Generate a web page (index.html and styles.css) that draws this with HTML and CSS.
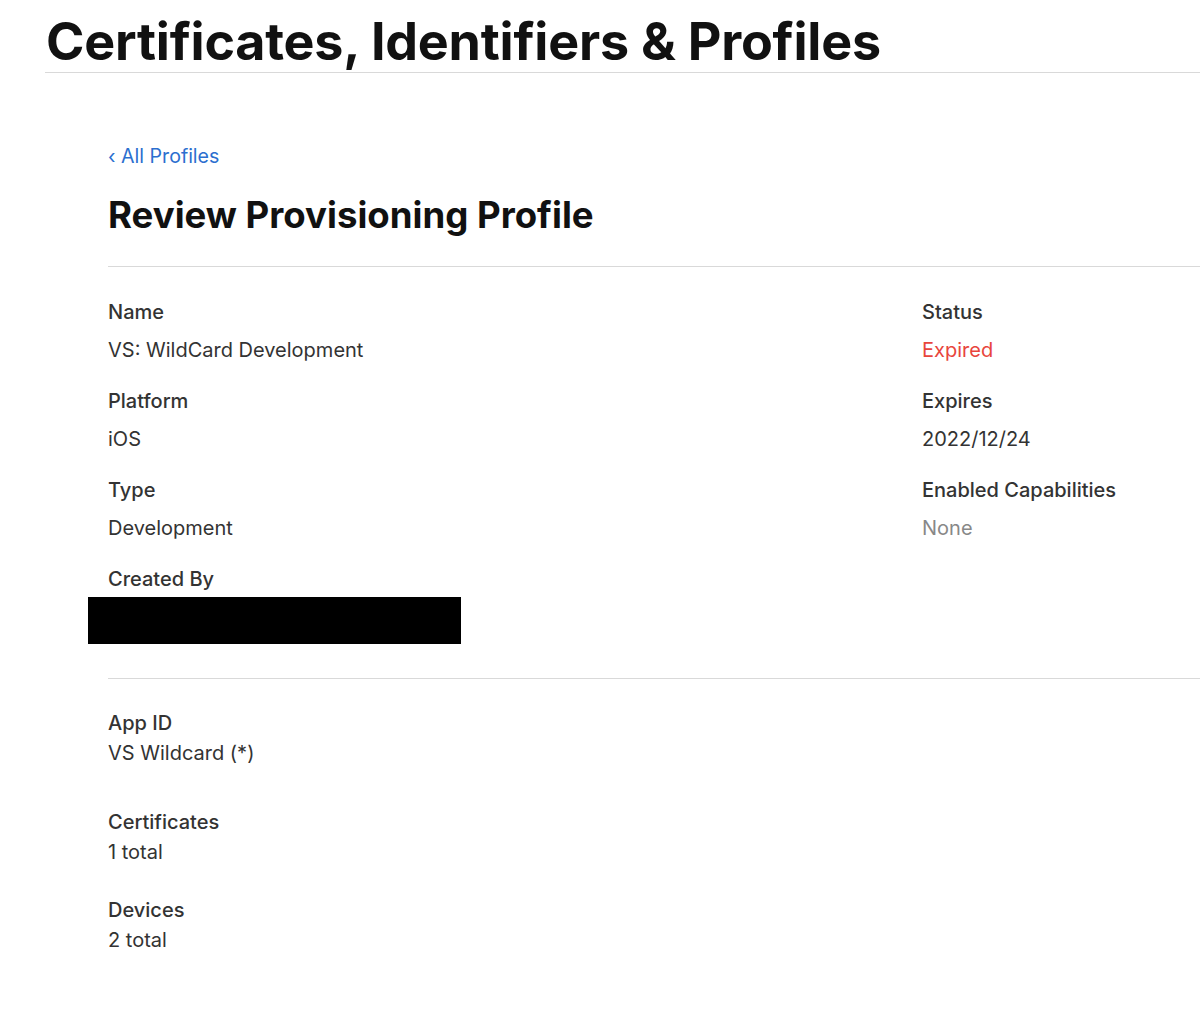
FILE: index.html
```html
<!DOCTYPE html>
<html lang="en">
<head>
<meta charset="utf-8">
<title>Review Provisioning Profile</title>
<link rel="stylesheet" href="styles.css">
</head>
<body>
<header class="page-header">
  <h1 class="page-title">Certificates, Identifiers &amp; Profiles</h1>
</header>
<main class="content">
  <a class="back-link" href="#"><span class="chev">‹</span> All Profiles</a>
  <h2 class="section-title">Review Provisioning Profile</h2>
  <section class="details">
    <div class="col">
      <div class="field">
        <div class="label">Name</div>
        <div class="value">VS: WildCard Development</div>
      </div>
      <div class="field">
        <div class="label">Platform</div>
        <div class="value">iOS</div>
      </div>
      <div class="field">
        <div class="label">Type</div>
        <div class="value">Development</div>
      </div>
      <div class="field">
        <div class="label">Created By</div>
        <div class="redacted"></div>
      </div>
    </div>
    <div class="col">
      <div class="field">
        <div class="label">Status</div>
        <div class="value expired">Expired</div>
      </div>
      <div class="field">
        <div class="label">Expires</div>
        <div class="value">2022/12/24</div>
      </div>
      <div class="field">
        <div class="label">Enabled Capabilities</div>
        <div class="value muted">None</div>
      </div>
    </div>
  </section>
  <section class="summary">
    <div class="sfield sfield-app">
      <div class="label">App ID</div>
      <div class="svalue">VS Wildcard (*)</div>
    </div>
    <div class="sfield sfield-certs">
      <div class="label">Certificates</div>
      <div class="svalue">1 total</div>
    </div>
    <div class="sfield">
      <div class="label">Devices</div>
      <div class="svalue">2 total</div>
    </div>
  </section>
</main>
</body>
</html>
```
FILE: styles.css
```css
html, body {
  margin: 0;
  padding: 0;
  background: #fff;
}
body {
  font-family: Inter, "Noto Sans", sans-serif;
  color: #333;
}
.page-header {
  margin-left: 45px;
  border-bottom: 1px solid #d9d9d9;
  height: 73px;
  box-sizing: border-box;
}
.page-title {
  margin: 0;
  padding-left: 1px;
  font-size: 52px;
  font-weight: 700;
  line-height: 84px;
  color: #111;
  letter-spacing: -0.22px;
  white-space: nowrap;
}
.content {
  padding-left: 108px;
  padding-top: 70px;
}
.back-link {
  display: inline-block;
  color: #2c6fcf;
  text-decoration: none;
  font-size: 19.6px;
  line-height: 26px;
}
.section-title {
  margin: 0;
  margin-top: 24px;
  font-size: 36.6px;
  font-weight: 700;
  line-height: 44px;
  color: #111;
  padding-bottom: 29px;
  border-bottom: 1px solid #d9d9d9;
}
.details {
  display: grid;
  grid-template-columns: 814px 1fr;
  padding-top: 32px;
  padding-bottom: 34px;
  border-bottom: 1px solid #d9d9d9;
}
.col {
  display: flex;
  flex-direction: column;
  gap: 25px;
}
.label {
  font-size: 20px;
  font-weight: 500;
  line-height: 26px;
  color: #333;
}
.value {
  font-size: 20px;
  line-height: 26px;
  margin-top: 12px;
  color: #333;
}
.expired {
  color: #e8453c;
}
.muted {
  color: #888;
}
.redacted {
  margin-top: 5px;
  margin-left: -20px;
  width: 373px;
  height: 47px;
  background: #000;
}
.summary {
  padding-top: 31px;
}
.sfield-app {
  margin-bottom: 43px;
}
.sfield-certs {
  margin-bottom: 32px;
}
.svalue {
  font-size: 20px;
  line-height: 26px;
  margin-top: 4px;
  color: #333;
}
```
